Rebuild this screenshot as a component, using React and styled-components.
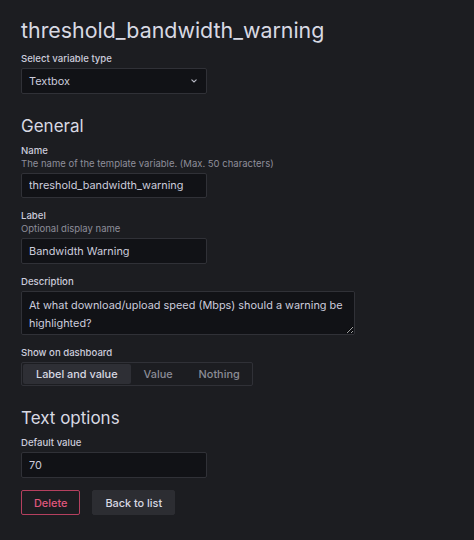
import styled, { createGlobalStyle } from 'styled-components'

const GlobalStyle = createGlobalStyle`
  html, body {
    margin: 0;
    padding: 0;
    background: #1c1d21;
  }
  body {
    font-family: Inter, "Noto Sans", sans-serif;
    color: #ccccdc;
  }
`

const Page = styled.div`
  width: 474px;
  min-height: 540px;
  box-sizing: border-box;
  padding: 17px 21px 0;
  background: #1c1d21;
`

const Title = styled.h1`
  margin: 0 0 10px;
  font-size: 21.4px;
  line-height: 26px;
  font-weight: 400;
  color: #d8d9e3;
`

const SectionTitle = styled.h3`
  margin: 22px 0 9px;
  font-size: 17px;
  line-height: 20px;
  font-weight: 400;
  color: #d8d9e3;
`

const Field = styled.div`
  display: flex;
  flex-direction: column;
  margin-bottom: ${p => (p.$last ? '0' : '12px')};
`

const LabelText = styled.label`
  font-size: 9.6px;
  line-height: 12px;
  font-weight: 500;
  color: #ccccdc;
`

const Hint = styled.div`
  font-size: 9.5px;
  line-height: 12px;
  color: #8e8e9a;
  margin-top: 1px;
`

const Control = styled.div`
  margin-top: 3px;
`

const Input = styled.input`
  box-sizing: border-box;
  width: ${p => p.$width || 186}px;
  height: 25.6px;
  padding: 0 7px;
  background: #111216;
  border: 1px solid #303137;
  border-radius: 2px;
  font-family: inherit;
  font-size: 10.9px;
  color: #ccccdc;
  outline: none;
`

const SelectBox = styled.div`
  box-sizing: border-box;
  width: 186px;
  height: 25.6px;
  padding: 0 8px 0 7px;
  display: flex;
  align-items: center;
  justify-content: space-between;
  background: #111216;
  border: 1px solid #303137;
  border-radius: 2px;
  font-size: 10.9px;
  color: #ccccdc;
`

const TextArea = styled.textarea`
  box-sizing: border-box;
  display: block;
  width: 334px;
  height: 44px;
  padding: 4px 7px;
  background: #111216;
  border: 1px solid #303137;
  border-radius: 2px;
  font-family: inherit;
  font-size: 10.9px;
  line-height: 18px;
  color: #ccccdc;
  outline: none;
  resize: vertical;
`

const RadioGroup = styled.div`
  box-sizing: border-box;
  display: inline-flex;
  height: 24.5px;
  padding: 1px;
  border: 1px solid #303137;
  border-radius: 2px;
  width: 232px;
`

const RadioOption = styled.div`
  display: flex;
  align-items: center;
  flex-shrink: 0;
  white-space: nowrap;
  padding: 0 ${p => p.$pad}px;
  font-size: 10.9px;
  font-weight: 500;
  color: ${p => (p.$active ? '#d8d9e3' : '#8b8c96')};
  background: ${p => (p.$active ? '#2e2f35' : 'transparent')};
  border-radius: 2px;
`

const Actions = styled.div`
  display: flex;
  gap: 12px;
  margin-top: 12px;
`

const Button = styled.button`
  box-sizing: border-box;
  height: 25.6px;
  padding: 0 ${p => p.$pad}px;
  font-family: inherit;
  font-size: 10.9px;
  font-weight: 500;
  border-radius: 2px;
  color: ${p => (p.$danger ? '#e0577d' : '#d8d9e3')};
  background: ${p => (p.$danger ? 'transparent' : '#2c2d32')};
  border: 1px solid ${p => (p.$danger ? '#b5405f' : '#2c2d32')};
`

function Chevron() {
  return (
    <svg width="8" height="6" viewBox="0 0 8 6" fill="none">
      <path d="M1.8 1.8 L4 4 L6.2 1.8" stroke="#b8b9c4" strokeWidth="1.1" strokeLinecap="round" />
    </svg>
  )
}

export default function App() {
  return (
    <Page>
      <GlobalStyle />
      <Title>threshold_bandwidth_warning</Title>

      <Field>
        <LabelText>Select variable type</LabelText>
        <Control>
          <SelectBox>
            <span>Textbox</span>
            <Chevron />
          </SelectBox>
        </Control>
      </Field>

      <SectionTitle>General</SectionTitle>

      <Field>
        <LabelText>Name</LabelText>
        <Hint>The name of the template variable. (Max. 50 characters)</Hint>
        <Control>
          <Input defaultValue="threshold_bandwidth_warning" />
        </Control>
      </Field>

      <Field>
        <LabelText>Label</LabelText>
        <Hint>Optional display name</Hint>
        <Control>
          <Input defaultValue="Bandwidth Warning" />
        </Control>
      </Field>

      <Field>
        <LabelText>Description</LabelText>
        <Control>
          <TextArea defaultValue="At what download/upload speed (Mbps) should a warning be highlighted?" />
        </Control>
      </Field>

      <Field $last>
        <LabelText>Show on dashboard</LabelText>
        <Control>
          <RadioGroup>
            <RadioOption $active $pad={13}>Label and value</RadioOption>
            <RadioOption $pad={13}>Value</RadioOption>
            <RadioOption $pad={13}>Nothing</RadioOption>
          </RadioGroup>
        </Control>
      </Field>

      <SectionTitle>Text options</SectionTitle>

      <Field $last>
        <LabelText>Default value</LabelText>
        <Control>
          <Input defaultValue="70" />
        </Control>
      </Field>

      <Actions>
        <Button $danger $pad={12}>Delete</Button>
        <Button $pad={12}>Back to list</Button>
      </Actions>
    </Page>
  )
}
